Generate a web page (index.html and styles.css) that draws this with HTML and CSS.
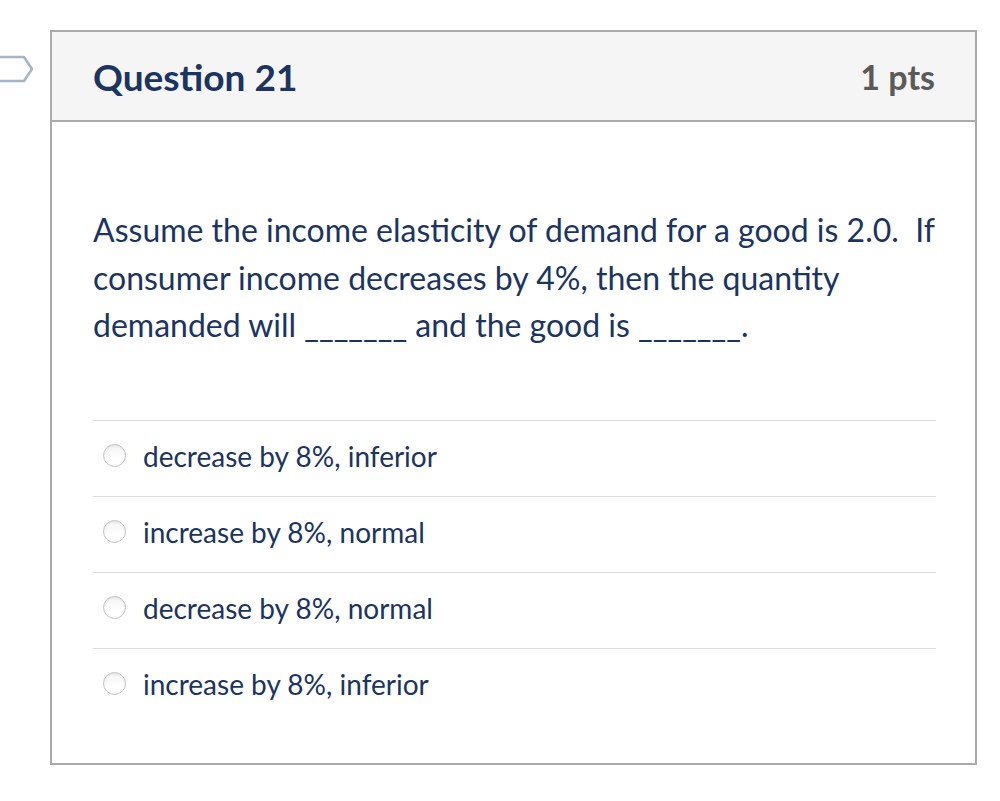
FILE: index.html
```html
<!DOCTYPE html>
<html>
<head>
<meta charset="utf-8">
<link rel="stylesheet" href="styles.css">
</head>
<body>
<div class="page">
  <svg class="flag" width="40" height="30" viewBox="0 0 40 30">
    <polygon points="-10,2 24,2 32,14 24,26 -10,26" fill="#fff" stroke="#a3b5c6" stroke-width="2.5" stroke-linejoin="round"/>
  </svg>
  <div class="card">
    <div class="card-header">
      <h2 class="title">Question 21</h2>
      <span class="pts">1 pts</span>
    </div>
    <div class="card-body">
      <p class="question">Assume the income elasticity of demand for a good is 2.0.&nbsp; If consumer income decreases by 4%, then the quantity demanded will _______ and the good is _______.</p>
      <div class="answers">
        <div class="answer"><span class="radio"></span><span class="label">decrease by 8%, inferior</span></div>
        <div class="answer"><span class="radio"></span><span class="label">increase by 8%, normal</span></div>
        <div class="answer"><span class="radio"></span><span class="label">decrease by 8%, normal</span></div>
        <div class="answer"><span class="radio"></span><span class="label">increase by 8%, inferior</span></div>
      </div>
    </div>
  </div>
</div>
</body>
</html>
```
FILE: styles.css
```css
html, body {
  margin: 0;
  padding: 0;
  background: #fff;
  font-family: Lato, "Liberation Sans", sans-serif;
}
.page {
  position: relative;
  padding: 30px 0 0 50px;
}
.flag {
  position: absolute;
  left: 0;
  top: 55px;
}
.card {
  width: 923px;
  border: 2px solid #aaaaaa;
  box-sizing: content-box;
}
.card-header {
  height: 88px;
  background: #f5f5f5;
  border-bottom: 2px solid #aaaaaa;
  display: flex;
  align-items: center;
  justify-content: space-between;
  padding: 0 40px 0 41px;
}
.title {
  margin: 0;
  font-size: 37px;
  font-weight: 700;
  color: #1c3461;
}
.pts {
  font-size: 34px;
  font-weight: 700;
  color: #5a5a5a;
}
.card-body {
  padding: 84px 39px 39px 41px;
}
.question {
  margin: 0;
  font-size: 32px;
  line-height: 47.5px;
  color: #1c3461;
}
.answers {
  margin-top: 71px;
}
.answer {
  box-sizing: border-box;
  height: 76px;
  padding-bottom: 5px;
  border-top: 1px solid #dddddd;
  display: flex;
  align-items: center;
}
.radio {
  width: 21px;
  height: 21px;
  border-radius: 50%;
  border: 1px solid #c4c4c4;
  background: linear-gradient(#f2f2f2, #ffffff 60%);
  box-shadow: inset 0 1px 2px rgba(0,0,0,0.08);
  margin-left: 10px;
  margin-right: 17px;
  flex: none;
}
.label {
  font-size: 28px;
  color: #1c3461;
}
```
